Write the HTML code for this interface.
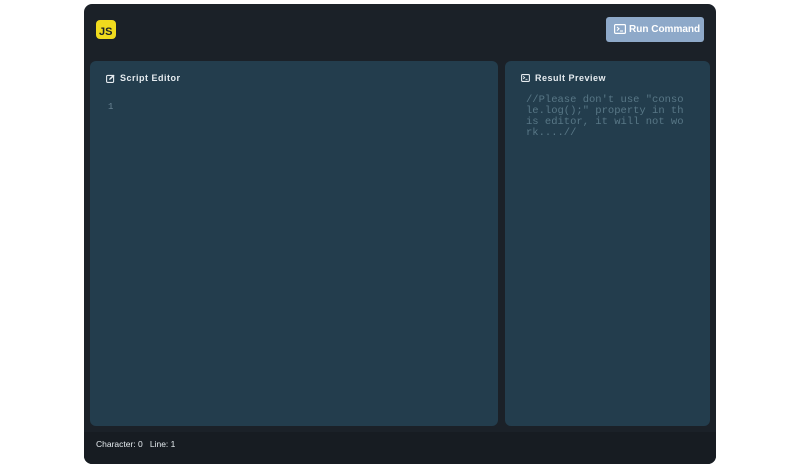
<!DOCTYPE html>
<html><head><style>
*{margin:0;padding:0;box-sizing:border-box}
body{width:800px;height:450px;background:#fff;font-family:"Liberation Sans",sans-serif;overflow:hidden;position:relative}
.app{position:absolute;left:84px;top:4px;width:632px;height:460px;background:#1b2128;border-radius:8px;overflow:hidden}
.fband{position:absolute;left:0;top:428px;width:632px;height:40px;background:#171c22}
.js{position:absolute;left:12px;top:16px;width:20px;height:19px;background:#f0db1e;border-radius:4px;color:#1b2128;font-weight:bold;font-size:11px;padding:7px 0 0 3px;line-height:11px}
.btn{position:absolute;left:522px;top:13px;width:98px;height:25px;background:#8ea9c9;border-radius:3px;color:#fff;font-size:10px;font-weight:bold;line-height:25px;padding-left:23px;white-space:nowrap}
.btn svg{position:absolute;left:8px;top:7px}
.panel{position:absolute;top:57px;height:365px;background:#233d4d;border-radius:6px}
.title{position:absolute;left:16px;top:12px;color:#e6ecf0;font-size:9px;font-weight:bold;letter-spacing:.5px;padding-left:14px;white-space:nowrap}
.title svg{position:absolute;left:0;top:1px}
.num{position:absolute;left:18px;top:41px;color:#6b8595;font-family:"Liberation Mono",monospace;font-size:9px}
.code{position:absolute;left:21px;top:34px;color:#587786;font-family:"Liberation Mono",monospace;font-size:10.5px;line-height:11px;white-space:pre}
.foot{position:absolute;left:12px;top:435px;color:#e6ecf0;font-size:8.5px}
</style></head><body>
<div class="app">
<div class="fband"></div>
<div class="js">JS</div>
<div class="btn"><svg width="12" height="10" viewBox="0 0 12 10"><rect x=".6" y=".6" width="10.8" height="8.8" rx="1" fill="none" stroke="#fff" stroke-width="1.2"/><path d="M3 3l2 1.8L3 6.6M6 7h3" stroke="#fff" fill="none" stroke-width="1.1"/></svg>Run Command</div>
<div class="panel" style="left:6px;width:408px">
<div class="title"><svg width="9" height="9" viewBox="0 0 9 9"><rect x=".6" y="1.4" width="7" height="7" rx="1" fill="none" stroke="#e6ecf0" stroke-width="1.1"/><path d="M3 6l.5-1.6L7.5.6 8.6 1.7 4.6 5.5z" fill="#e6ecf0"/></svg>Script Editor</div>
<div class="num">1</div>
</div>
<div class="panel" style="left:421px;width:205px">
<div class="title"><svg width="9" height="8" viewBox="0 0 9 8"><rect x=".6" y=".6" width="7.8" height="6.8" rx="1" fill="none" stroke="#e6ecf0" stroke-width="1.1"/><path d="M2.2 2.3l1.5 1.3-1.5 1.3M4.5 5.3h2" stroke="#e6ecf0" fill="none" stroke-width=".9"/></svg>Result Preview</div>
<div class="code">//Please don't use "conso
le.log();" property in th
is editor, it will not wo
rk....//</div>
</div>
<div class="foot">Character: 0 &nbsp; Line: 1</div>
</div>
</body></html>
